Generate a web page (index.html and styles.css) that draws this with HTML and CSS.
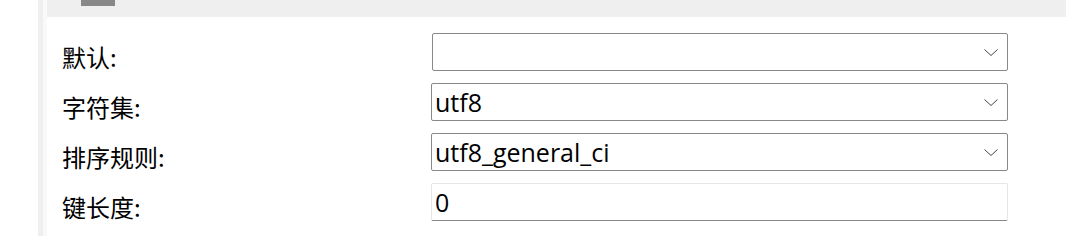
FILE: index.html
```html
<!DOCTYPE html>
<html lang="zh-CN">
<head>
<meta charset="utf-8">
<link rel="stylesheet" href="styles.css">
</head>
<body>
<div class="page">
  <div class="gutter"></div>
  <div class="strip"></div>
  <div class="strip2"></div>
  <div class="panel">
    <div class="band"><div class="tab"></div></div>
    <div class="form">
      <div class="row">
        <div class="label">默认:</div>
        <div class="field select first"><span class="value"></span><svg class="chev" viewBox="0 0 14 7"><path d="M0.5 0.5 L7 6.5 L13.5 0.5" fill="none" stroke="#444" stroke-width="1"/></svg></div>
      </div>
      <div class="row">
        <div class="label">字符集:</div>
        <div class="field select"><span class="value">utf8</span><svg class="chev" viewBox="0 0 14 7"><path d="M0.5 0.5 L7 6.5 L13.5 0.5" fill="none" stroke="#444" stroke-width="1"/></svg></div>
      </div>
      <div class="row">
        <div class="label">排序规则:</div>
        <div class="field select"><span class="value">utf8_general_ci</span><svg class="chev" viewBox="0 0 14 7"><path d="M0.5 0.5 L7 6.5 L13.5 0.5" fill="none" stroke="#444" stroke-width="1"/></svg></div>
      </div>
      <div class="row">
        <div class="label">键长度:</div>
        <div class="field text"><span class="value">0</span></div>
      </div>
    </div>
  </div>
</div>
</body>
</html>
```
FILE: styles.css
```css
html, body {
  margin: 0;
  padding: 0;
  background: #ffffff;
}
.page {
  display: flex;
  width: 1066px;
  height: 236px;
  overflow: hidden;
}
.gutter {
  width: 38px;
  background: #ffffff;
}
.strip {
  width: 5px;
  background: #efefef;
}
.strip2 {
  width: 4px;
  background: #f9f9f9;
}
.panel {
  flex: 1;
  display: flex;
  flex-direction: column;
}
.band {
  height: 17px;
  background: #efefef;
  padding-left: 34px;
}
.tab {
  width: 34px;
  height: 6px;
  background: #888888;
}
.form {
  display: flex;
  flex-direction: column;
  gap: 12px;
  padding: 16px 0 0 15px;
}
.row {
  display: grid;
  grid-template-columns: 369px 577px;
  align-items: center;
  height: 38px;
}
.label {
  font-family: "Noto Sans CJK SC", "Microsoft YaHei", sans-serif;
  font-size: 24px;
  color: #000;
  padding-top: 10px;
  line-height: 24px;
  white-space: nowrap;
}
.field {
  box-sizing: border-box;
  height: 38px;
  border: 1px solid #888888;
  border-radius: 2px;
  display: flex;
  align-items: center;
  justify-content: space-between;
  padding: 0 9px 0 3px;
  font-family: "Open Sans", "Noto Sans", sans-serif;
  font-size: 25px;
  color: #000;
}
.field.first {
  margin-left: 1px;
}
.field.text {
  border-color: #e6e6e6;
  border-bottom-color: #888888;
}
.value {
  line-height: 36px;
  white-space: nowrap;
}
.chev {
  width: 14px;
  height: 7px;
}
```
